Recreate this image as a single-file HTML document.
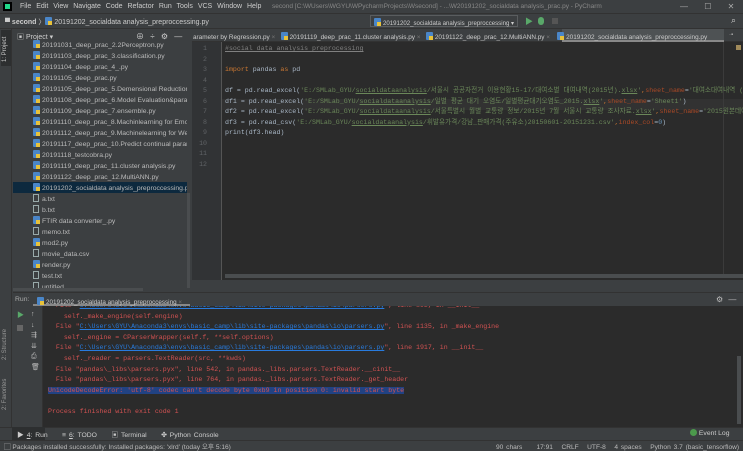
<!DOCTYPE html>
<html><head><meta charset="utf-8"><style>
*{margin:0;padding:0;box-sizing:border-box}
body{width:743px;height:450px;background:#3c3f41;font-family:"Liberation Sans","Noto Sans CJK KR",sans-serif;font-size:7px;color:#bbbbbb;position:relative;overflow:hidden}
.a{position:absolute;white-space:nowrap}
.m{font-family:"Liberation Mono","Noto Sans CJK KR",monospace;font-size:6.6px}
.ic{display:inline-block;width:7px;height:8px;background:#4a86c8;border-radius:1px;vertical-align:-1px;margin-right:2px;position:relative}
.ic:after{content:"";position:absolute;right:0;bottom:0;width:4px;height:4px;background:#e8c23a}
.ft{display:inline-block;width:6px;height:8px;border:1px solid #9aa;vertical-align:-1px;margin-right:3px}
.u{text-decoration:underline}
.r{color:#d25252}
.lk{color:#287bde;text-decoration:underline}
.tree div{height:11px;line-height:11px;overflow:hidden}
</style></head><body>
<!-- menu bar -->
<div class="a" style="left:0;top:0;width:743px;height:13px;background:#3c3f41"></div>
<div class="a" style="left:3px;top:2px;width:9px;height:9px;background:#21d789;border:2px solid #000"></div>
<div class="a" style="left:20px;top:3px;font-size:7px;color:#ccc;word-spacing:3px">File Edit View Navigate Code Refactor Run Tools VCS Window Help</div>
<div class="a" style="left:272px;top:3px;font-size:6.5px;color:#888">second [C:\WUsers\WGYU\WPycharmProjects\Wsecond] - ...\W20191202_socialdata analysis_prac.py - PyCharm</div>
<div class="a" style="left:680px;top:2px;color:#aaa;font-size:8px;word-spacing:14px">— ☐ ✕</div>
<!-- nav bar -->
<div class="a" style="left:0;top:13px;width:743px;height:16px;background:#3c3f41;border-top:1px solid #323232;border-bottom:1px solid #323232"></div>
<div class="a" style="left:5px;top:17px;color:#ccc;font-size:7px"><b>▀</b> <b>second</b> 〉<span class="ic"></span>20191202_socialdata analysis_preproccessing.py</div>
<div class="a" style="left:370px;top:15px;width:148px;height:12px;border:1px solid #5a5d5f;background:#3c3f41;overflow:hidden"></div>
<div class="a" style="left:374px;top:17.5px;color:#ccc;font-size:6.1px"><span class="ic"></span>20191202_socialdata analysis_preproccessing ▾</div>
<div class="a" style="left:525px;top:16px;color:#59a869;font-size:8px">▶</div>
<div class="a" style="left:538px;top:17px;width:6px;height:8px;background:#59a869;border-radius:3px"></div>
<div class="a" style="left:552px;top:18px;width:6px;height:6px;background:#555"></div>
<div class="a" style="left:731px;top:15px;color:#ccc;font-size:9px">⌕</div>
<!-- left stripe -->
<div class="a" style="left:0;top:29px;width:12px;height:398px;background:#3c3f41;border-right:1px solid #323232"></div>
<div class="a" style="left:1px;top:30px;width:10px;height:36px;background:#2d2f30"></div>
<div class="a" style="left:2px;top:62px;transform:rotate(-90deg);transform-origin:0 0;font-size:6px;color:#ccc">1: Project</div>
<div class="a" style="left:2px;top:360px;transform:rotate(-90deg);transform-origin:0 0;font-size:6px;color:#999">2: Structure</div>
<div class="a" style="left:2px;top:410px;transform:rotate(-90deg);transform-origin:0 0;font-size:6px;color:#999">2: Favorites</div>
<!-- project panel -->
<div class="a" style="left:13px;top:29px;width:179px;height:263px;background:#3c3f41"></div>
<div class="a" style="left:17px;top:32px;color:#ccc;font-size:7px">▣ Project ▾</div>
<div class="a" style="left:136px;top:31px;color:#ccc;font-size:8px;word-spacing:4px">⊕ ÷ ⚙ —</div>
<div class="a" style="left:13px;top:182px;width:174px;height:11px;background:#0d293e"></div>
<div class="a" style="left:187px;top:193px;width:3px;height:95px;background:#4a4d4f"></div>
<div class="a tree" style="left:33px;top:40px;width:154px;height:252px;overflow:hidden;font-size:6.8px;color:#bbb">
<div><span class="ic"></span>20191031_deep_prac_2.2Perceptron.py</div>
<div><span class="ic"></span>20191103_deep_prac_3.classification.py</div>
<div><span class="ic"></span>20191104_deep_prac_4_.py</div>
<div><span class="ic"></span>20191105_deep_prac.py</div>
<div><span class="ic"></span>20191105_deep_prac_5.Demensional Reduction.py</div>
<div><span class="ic"></span>20191108_deep_prac_6.Model Evaluation&amp;parameter</div>
<div><span class="ic"></span>20191109_deep_prac_7.ensemble.py</div>
<div><span class="ic"></span>20191110_deep_prac_8.Machinlearning for Emotion</div>
<div><span class="ic"></span>20191112_deep_prac_9.Machinelearning for Webapp</div>
<div><span class="ic"></span>20191117_deep_prac_10.Predict continual parameter</div>
<div><span class="ic"></span>20191118_testcobra.py</div>
<div><span class="ic"></span>20191119_deep_prac_11.cluster analysis.py</div>
<div><span class="ic"></span>20191122_deep_prac_12.MultiANN.py</div>
<div><span class="ic"></span>20191202_socialdata analysis_preproccessing.py</div>
<div><span class="ft"></span>a.txt</div>
<div><span class="ft"></span>b.txt</div>
<div><span class="ic"></span>FTIR data converter_.py</div>
<div><span class="ft"></span>memo.txt</div>
<div><span class="ic"></span>mod2.py</div>
<div><span class="ft"></span>movie_data.csv</div>
<div><span class="ic"></span>render.py</div>
<div><span class="ft"></span>test.txt</div>
<div><span class="ft"></span>untitled</div>
</div>
<div class="a" style="left:13px;top:288px;width:130px;height:3px;background:#4a4d4f"></div>
<!-- tabs -->
<div class="a" style="left:192px;top:29px;width:551px;height:13px;background:#3c3f41;border-bottom:1px solid #323232"></div>
<div class="a" style="left:562px;top:29px;width:162px;height:13px;background:#4e5254;border-bottom:2px solid #888"></div>
<div class="a" style="left:193px;top:32px;font-size:6.4px;color:#ccc">arameter by Regression.py <span style="color:#777">×</span>&nbsp;&nbsp;&nbsp;<span class="ic"></span>20191119_deep_prac_11.cluster analysis.py <span style="color:#777">×</span>&nbsp;&nbsp;&nbsp;<span class="ic"></span>20191122_deep_prac_12.MultiANN.py <span style="color:#777">×</span>&nbsp;&nbsp;&nbsp;&nbsp;<span class="ic"></span>20191202_socialdata analysis_preproccessing.py</div>
<div class="a" style="left:729px;top:32px;color:#aaa;font-size:6px">·▪</div>
<!-- editor -->
<div class="a" style="left:192px;top:42px;width:30px;height:238px;background:#313335;border-right:1px solid #555"></div>
<div class="a" style="left:222px;top:42px;width:521px;height:238px;background:#2b2b2b"></div>
<div class="a" style="left:222px;top:99px;width:521px;height:11px;background:#323232"></div>
<div class="a" style="left:723px;top:42px;width:1px;height:233px;background:#3b3b3b"></div>
<div class="a" style="left:736px;top:45px;width:5px;height:5px;background:#a08a5a"></div>
<div class="a" style="left:225px;top:274px;width:518px;height:4px;background:#4a4d4f"></div>
<div class="a m" style="left:192px;top:44px;width:15px;text-align:right;color:#606366;line-height:10.5px">1<br>2<br>3<br>4<br>5<br>6<br>7<br>8<br>9<br>10<br>11<br>12</div>
<div class="a m" style="left:225px;top:44px;width:518px;overflow:hidden;color:#a9b7c6;line-height:10.5px">
<div style="color:#808080" class="u">#social data analysis preprocessing</div><div>&nbsp;</div>
<div><span style="color:#cc7832">import</span> pandas <span style="color:#cc7832">as</span> pd</div><div>&nbsp;</div>
<div>df = pd.read_excel(<span style="color:#6a8759">'E:/SMLab_GYU/<span class="u">socialdataanalysis</span>/서울시 공공자전거 이용현황15-17/대여소별 대여내역(2015년).<span class="u">xlsx</span>'</span><span style="color:#cc7832">,</span><span style="color:#aa4926">sheet_name</span>=<span style="color:#6a8759">'대여소대여내역 (2</span></div>
<div>df1 = pd.read_excel(<span style="color:#6a8759">'E:/SMLab_GYU/<span class="u">socialdataanalysis</span>/일별 평균 대기 오염도/일별평균대기오염도_2015.<span class="u">xlsx</span>'</span><span style="color:#cc7832">,</span><span style="color:#aa4926">sheet_name</span>=<span style="color:#6a8759">'Sheet1'</span>)</div>
<div>df2 = pd.read_excel(<span style="color:#6a8759">'E:/SMLab_GYU/<span class="u">socialdataanalysis</span>/서울특별시 월별 교통량 정보/2015년 7월 서울시 교통량 조사자료.<span class="u">xlsx</span>'</span><span style="color:#cc7832">,</span><span style="color:#aa4926">sheet_name</span>=<span style="color:#6a8759">'2015원본데이</span></div>
<div>df3 = pd.read_csv(<span style="color:#6a8759">'E:/SMLab_GYU/<span class="u">socialdataanalysis</span>/휘발유가격/강남_판매가격(주유소)20150601-20151231.csv'</span><span style="color:#cc7832">,</span><span style="color:#aa4926">index_col</span>=<span style="color:#6897bb">0</span>)</div>
<div>print(df3.head)</div>
</div>
<!-- run panel -->
<div class="a" style="left:192px;top:280px;width:551px;height:12px;background:#3c3f41"></div>
<div class="a" style="left:13px;top:292px;width:730px;height:14px;background:#3c3f41;border-top:1px solid #323232"></div>
<div class="a" style="left:15px;top:296px;font-size:6.8px;color:#aaa">Run:</div>
<div class="a" style="left:33px;top:293px;width:157px;height:13px;border-bottom:2px solid #888"></div>
<div class="a" style="left:37px;top:296.5px;font-size:6.3px;color:#ccc"><span class="ic"></span>20191202_socialdata analysis_preproccessing <span style="color:#777">×</span></div>
<div class="a" style="left:716px;top:295px;color:#bbb;font-size:8px;word-spacing:3px">⚙ —</div>
<div class="a" style="left:13px;top:306px;width:14px;height:121px;background:#3c3f41"></div>
<div class="a" style="left:27px;top:306px;width:16px;height:121px;background:#3c3f41;border-right:1px solid #323232"></div>
<div class="a" style="left:17px;top:310px;color:#59a869;font-size:7px">▶</div>
<div class="a" style="left:17px;top:325px;width:6px;height:6px;background:#666"></div>
<div class="a" style="left:31px;top:310px;color:#bbb;font-size:7px;line-height:10.5px">↑<br>↓<br>⇶<br>⇊<br>⎙<br>🗑</div>
<div class="a" style="left:43px;top:306px;width:700px;height:121px;background:#2b2b2b"></div>
<div class="a" style="left:737px;top:356px;width:4px;height:68px;background:#4a4d4f"></div>
<div class="a" style="left:43px;top:306px;width:694px;height:121px;overflow:hidden">
<div class="a m r" style="left:5px;top:-5px;line-height:10.6px">
<div>&nbsp;&nbsp;File "<span class="lk">C:\Users\GYU\Anaconda3\envs\basic_camp\lib\site-packages\pandas\io\parsers.py</span>", line 895, in __init__</div>
<div>&nbsp;&nbsp;&nbsp;&nbsp;self._make_engine(self.engine)</div>
<div>&nbsp;&nbsp;File "<span class="lk">C:\Users\GYU\Anaconda3\envs\basic_camp\lib\site-packages\pandas\io\parsers.py</span>", line 1135, in _make_engine</div>
<div>&nbsp;&nbsp;&nbsp;&nbsp;self._engine = CParserWrapper(self.f, **self.options)</div>
<div>&nbsp;&nbsp;File "<span class="lk">C:\Users\GYU\Anaconda3\envs\basic_camp\lib\site-packages\pandas\io\parsers.py</span>", line 1917, in __init__</div>
<div>&nbsp;&nbsp;&nbsp;&nbsp;self._reader = parsers.TextReader(src, **kwds)</div>
<div>&nbsp;&nbsp;File "pandas\_libs\parsers.pyx", line 542, in pandas._libs.parsers.TextReader.__cinit__</div>
<div>&nbsp;&nbsp;File "pandas\_libs\parsers.pyx", line 764, in pandas._libs.parsers.TextReader._get_header</div>
<div><span style="background:#214283">UnicodeDecodeError: 'utf-8' codec can't decode byte 0xb9 in position 0: invalid start byte</span></div>
<div>&nbsp;</div>
<div>Process finished with exit code 1</div>
</div>
</div>
<!-- bottom toolbar -->
<div class="a" style="left:0;top:427px;width:743px;height:13px;background:#3c3f41;border-top:1px solid #323232"></div>
<div class="a" style="left:12px;top:427px;width:33px;height:13px;background:#2d2f30"></div>
<div class="a" style="left:17px;top:429px;font-size:6.8px;color:#ccc;word-spacing:1px">▶ <u>4</u>: Run &nbsp;&nbsp;&nbsp;&nbsp;≡ <u>6</u>: TODO &nbsp;&nbsp;&nbsp;&nbsp;▣ Terminal &nbsp;&nbsp;&nbsp;&nbsp;✤ Python Console</div>
<div class="a" style="left:690px;top:429px;font-size:6.8px;color:#ccc"><span style="display:inline-block;width:7px;height:7px;border-radius:50%;background:#4c9a4c;vertical-align:-1px"></span> Event Log</div>
<!-- status -->
<div class="a" style="left:0;top:440px;width:743px;height:10px;background:#3c3f41;border-top:1px solid #323232"></div>
<div class="a" style="left:4px;top:441px;font-size:6.6px;color:#bbb">▢ Packages installed successfully: Installed packages: 'xlrd' (today 오후 5:16)</div>
<div class="a" style="left:496px;top:441px;font-size:6.6px;color:#bbb;word-spacing:1px">90 chars &nbsp;&nbsp;&nbsp;&nbsp;17:91 &nbsp;&nbsp;CRLF &nbsp;&nbsp;UTF-8 &nbsp;&nbsp;4 spaces &nbsp;&nbsp;Python 3.7 (basic_tensorflow) &nbsp;&nbsp;🔓 ▣</div>
</body></html>
